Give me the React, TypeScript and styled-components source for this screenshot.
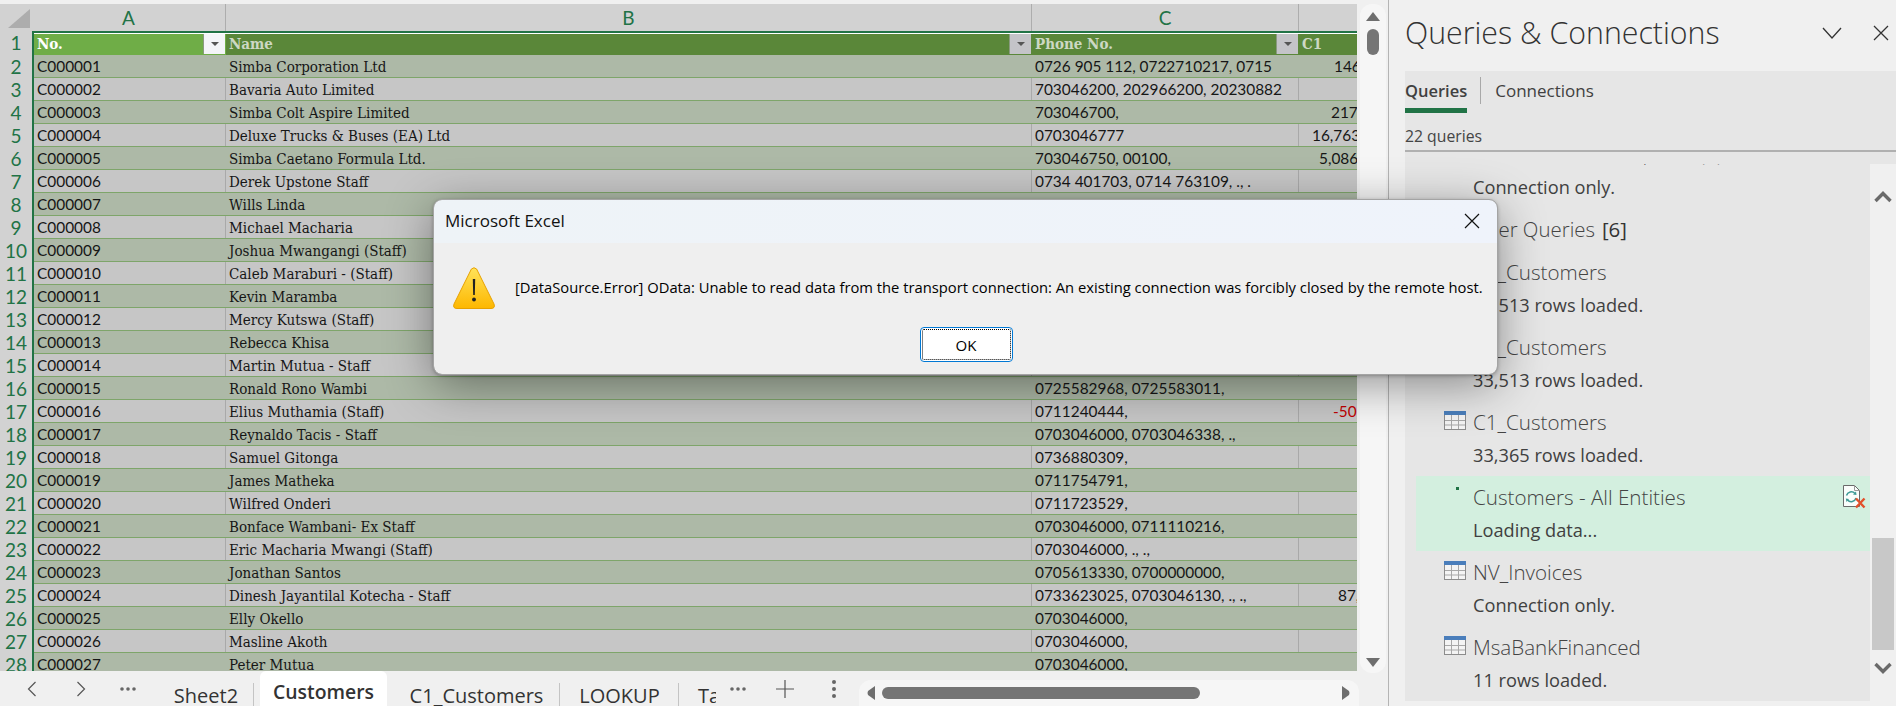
import React from "react";
import styled, { createGlobalStyle } from "styled-components";

const UI = `"Open Sans", "Noto Sans", sans-serif`;
const SLAB = `"DejaVu Serif Condensed", "DejaVu Serif", serif`;
const NUM = `Lato, "Open Sans", sans-serif`;

const Global = createGlobalStyle`
  html, body { margin: 0; padding: 0; background: #f0f0f0; }
  #root { width: 1896px; height: 706px; overflow: hidden; }
  * { box-sizing: border-box; }
`;

const Page = styled.div`
  position: relative;
  display: flex;
  width: 1896px;
  height: 706px;
  overflow: hidden;
  background: #f0f0f0;
  font-family: ${UI};
`;
const Workbook = styled.div`
  display: flex;
  flex-direction: column;
  width: 1389px;
  flex: none;
  border-right: 1px solid #b4b4b4;
`;
const SheetArea = styled.div`
  display: flex;
  height: 671px;
  padding-top: 4px;
`;
const Sheet = styled.div`
  display: flex;
  flex-direction: column;
  width: 1357px;
  overflow: hidden;
  background: #c6c6c6;
`;
const ColHeaders = styled.div`
  display: flex;
  height: 27px;
  flex: none;
  background: #d2d2d2;
`;
const Corner = styled.div`
  width: 32px;
  flex: none;
  display: flex;
  align-items: flex-end;
  justify-content: flex-end;
  padding: 0 2px 3px 0;
`;
const ColHead = styled.div<{ $w: number }>`
  width: ${(p) => p.$w}px;
  flex: none;
  text-align: center;
  font: 400 19px/27px ${NUM};
  color: #217346;
  border-right: 1px solid #adadad;
`;
const SheetMain = styled.div`
  display: flex;
  flex: 1;
  min-height: 0;
`;
const RowHeads = styled.div`
  width: 32px;
  flex: none;
  background: #d2d2d2;
  display: flex;
  flex-direction: column;
`;
const RowHead = styled.div<{ $first?: boolean }>`
  height: ${(p) => (p.$first ? 24 : 23)}px;
  flex: none;
  text-align: center;
  font: 400 19px/23px ${NUM};
  color: #217346;
`;
const Table = styled.div`
  flex: 1;
  min-width: 0;
  overflow: hidden;
  border-left: 2px solid #217346;
  border-top: 2px solid #217346;
  display: flex;
  flex-direction: column;
`;
const HeadRow = styled.div`
  display: grid;
  grid-template-columns: 192px 806px 267px 200px;
  height: 22px;
  flex: none;
  border-top: 1px solid #fff;
  background: #5a8739;
`;
const HeadCell = styled.div<{ $active?: boolean }>`
  position: relative;
  padding-left: 3px;
  background: ${(p) => (p.$active ? "#6fad47" : "#5a8739")};
  color: ${(p) => (p.$active ? "#fff" : "#cdd8c4")};
  font: 700 15px/21px ${SLAB};
`;
const Filter = styled.span<{ $active?: boolean }>`
  position: absolute;
  right: 1px;
  top: 0;
  bottom: 1px;
  width: 22px;
  display: flex;
  align-items: center;
  justify-content: center;
  background: ${(p) => (p.$active ? "#f4f5f8" : "#c4c4c8")};
  border-left: 1px solid #8a9a80;
  &::after {
    content: "";
    border-left: 4px solid transparent;
    border-right: 4px solid transparent;
    border-top: 4px solid #555;
  }
`;
const DataRow = styled.div<{ $alt: boolean }>`
  display: grid;
  grid-template-columns: 192px 806px 267px 200px;
  height: 23px;
  flex: none;
  background: ${(p) => (p.$alt ? "#adb9a7" : "#c6c6c6")};
  border-bottom: 1px solid #7ea56a;
`;
const Cell = styled.div<{ $alt: boolean; $font: "slab" | "num" }>`
  padding-left: 3px;
  overflow: hidden;
  white-space: nowrap;
  color: #161616;
  border-right: 1px solid ${(p) => (p.$alt ? "transparent" : "#a9a9a9")};
  font: ${(p) =>
    p.$font === "slab" ? `400 15px/24px ${SLAB}` : `400 15.4px/22px ${NUM}`};
`;
const ValueCell = styled.div<{ $indent: number; $neg?: boolean }>`
  padding-left: ${(p) => p.$indent}px;
  white-space: nowrap;
  color: ${(p) => (p.$neg ? "#c00000" : "#161616")};
  font: 400 15.4px/22px ${NUM};
`;
const VScroll = styled.div`
  width: 26px;
  margin-left: 3px;
  flex: none;
  height: 669px;
  background: #f6f6f6;
  border-radius: 12px;
  display: flex;
  flex-direction: column;
  align-items: center;
  padding: 8px 0 6px;
`;
const VThumb = styled.div`
  width: 12px;
  height: 26px;
  margin-top: 8px;
  border-radius: 6px;
  background: #757575;
`;
const Grow = styled.div`
  flex: 1;
`;
const TabBar = styled.div`
  display: flex;
  height: 35px;
  align-items: stretch;
  overflow: hidden;
  position: relative;
`;
const NavIcon = styled.div<{ $w: number }>`
  width: ${(p) => p.$w}px;
  flex: none;
  display: flex;
  align-items: center;
  justify-content: center;
  color: #555;
`;
const Tab = styled.div<{ $w: number; $active?: boolean; $line?: boolean; $cut?: boolean }>`
  width: ${(p) => p.$w}px;
  flex: none;
  overflow: hidden;
  white-space: nowrap;
  position: relative;
  text-align: ${(p) => (p.$cut ? "left" : "center")};
  padding-left: ${(p) => (p.$cut ? 19 : 0)}px;
  margin: ${(p) => (p.$active ? "0 6px" : "0")};
  color: #333;
  font: ${(p) => (p.$active ? `600 19.4px/42px ${UI}` : `400 20px/50px ${UI}`)};
  background: ${(p) => (p.$active ? "#ffffff" : "transparent")};
  border-radius: ${(p) => (p.$active ? "6px 6px 0 0" : "0")};
  &::after {
    content: "";
    display: ${(p) => (p.$line ? "block" : "none")};
    position: absolute;
    right: 0;
    top: 12px;
    bottom: 0;
    width: 1px;
    background: #c4c4c4;
  }
`;
const HTrack = styled.div`
  width: 500px;
  margin: 9px 29px 0 auto;
  background: #f6f6f6;
  border-radius: 12px 12px 0 0;
  flex: none;
  display: flex;
  align-items: center;
  padding: 0 9px 0 8px;
`;
const HThumb = styled.div`
  width: 318px;
  height: 12px;
  margin-left: 7px;
  border-radius: 6px;
  background: #757575;
`;

const Panel = styled.div`
  flex: 1;
  min-width: 0;
  display: flex;
  flex-direction: column;
  padding-left: 16px;
  height: 701px;
`;
const PanelHead = styled.div`
  height: 71px;
  flex: none;
  display: flex;
  align-items: center;
  padding-bottom: 5px;
`;
const PanelTitle = styled.div`
  font: 300 30.3px/1 ${UI};
  color: #333;
  flex: 1;
`;
const HeadIcons = styled.div`
  display: flex;
  align-items: center;
  gap: 31px;
  padding: 0 7px 0 0;
`;
const Inner = styled.div`
  flex: 1;
  min-height: 0;
  background: #e6e6e6;
  display: flex;
  flex-direction: column;
`;
const TabsRow = styled.div`
  display: flex;
  height: 42px;
  flex: none;
  padding-top: 6px;
`;
const PanelTab = styled.div<{ $active?: boolean }>`
  position: relative;
  height: 27px;
  font: ${(p) => (p.$active ? "600 16.5px" : "400 17px")}/27px ${UI};
  color: #404040;
  &::after {
    content: "";
    display: ${(p) => (p.$active ? "block" : "none")};
    position: absolute;
    left: 0;
    right: 0;
    top: 31px;
    height: 5px;
    background: #217346;
  }
`;
const TabSep = styled.div`
  width: 1px;
  height: 27px;
  background: #a8a8a8;
  margin: 0 14px 0 13px;
`;
const CountRow = styled.div`
  height: 39px;
  flex: none;
  padding-top: 12px;
  border-bottom: 2px solid #b0b0b0;
  font: 400 15.75px/22px ${UI};
  color: #444;
`;
const ListArea = styled.div`
  flex: 1;
  min-height: 0;
  display: flex;
`;
const ListClip = styled.div`
  flex: 1;
  min-width: 0;
  overflow: hidden;
  margin-top: 12px;
  padding-left: 11px;
`;
const ListInner = styled.div`
  margin-top: -31px;
`;
const ListScroll = styled.div`
  width: 26px;
  flex: none;
  margin-top: 12px;
  background: #f0f0f0;
  display: flex;
  flex-direction: column;
  align-items: center;
  padding-top: 26px;
`;
const ListThumb = styled.div`
  width: 22px;
  height: 112px;
  margin: 335px 0 12px;
  background: #c8c8c8;
`;
const Item = styled.div<{ $selected?: boolean }>`
  position: relative;
  height: 75px;
  padding: 2px 0 0 57px;
  background: ${(p) => (p.$selected ? "#d3efdf" : "transparent")};
`;
const ItemName = styled.div`
  font: 300 20.6px/38px ${UI};
  color: #444;
  white-space: nowrap;
`;
const ItemSub = styled.div`
  margin-top: 1px;
  font: 400 18.2px/27px ${UI};
  color: #404040;
  white-space: nowrap;
`;
const ItemIcon = styled.svg`
  position: absolute;
  left: 28px;
  top: 10px;
`;
const LoadDot = styled.span`
  position: absolute;
  left: 40px;
  top: 11px;
  width: 3px;
  height: 3px;
  background: #217346;
`;
const StateIcon = styled.svg`
  position: absolute;
  left: 427px;
  top: 9px;
`;
const GroupHead = styled.div`
  height: 43px;
  padding-left: 48px;
  font: 300 20.4px/43px ${UI};
  color: #444;
  white-space: nowrap;
`;
const GroupCount = styled.span`
  font-weight: 400;
  margin-left: 7px;
  color: #333;
`;

const DialogShadow = styled.div`
  position: absolute;
  left: 434px;
  top: 200px;
  width: 1063px;
  height: 174px;
  border-radius: 8px;
  box-shadow: 0 10px 48px rgba(0, 0, 0, 0.42), 0 1px 4px rgba(0, 0, 0, 0.4);
`;
const Dialog = styled.div`
  position: absolute;
  left: 434px;
  top: 200px;
  width: 1063px;
  height: 174px;
  border-radius: 8px;
  background: #efefef;
  overflow: hidden;
  outline: 1px solid #a4a4a4;
  display: flex;
  flex-direction: column;
`;
const DialogTitleBar = styled.div`
  height: 43px;
  flex: none;
  display: flex;
  align-items: center;
  justify-content: space-between;
  padding: 0 17px 2px 11px;
  background: linear-gradient(90deg, #eef3f7, #eff3fb);
  font: 400 17px/1 ${UI};
  color: #111;
`;
const DialogBody = styled.div`
  display: flex;
  align-items: center;
  height: 84px;
  flex: none;
  padding: 5px 0 0 19px;
`;
const Message = styled.div`
  margin-left: 20px;
  font: 400 14.75px/1 ${UI};
  color: #000;
  white-space: nowrap;
`;
const DialogFoot = styled.div`
  display: flex;
  justify-content: center;
`;
const OkButton = styled.button`
  width: 93px;
  height: 35px;
  margin-left: 1px;
  background: #fff;
  border: 1.5px solid #0078d4;
  border-radius: 4px;
  outline: 1px dotted #000;
  outline-offset: -3.5px;
  font: 400 15px/1 ${UI};
  color: #000;
  padding: 2px 0 0;
`;

type Rec = { no: string; name: string; phone: string; val?: string; indent?: number; neg?: boolean };
const rows: Rec[] = [
  { no: "C000001", name: "Simba Corporation Ltd", phone: "0726 905 112, 0722710217, 0715", val: "146,", indent: 35 },
  { no: "C000002", name: "Bavaria Auto Limited", phone: "703046200, 202966200, 20230882" },
  { no: "C000003", name: "Simba Colt Aspire Limited", phone: "703046700,", val: "217,", indent: 32 },
  { no: "C000004", name: "Deluxe Trucks & Buses (EA) Ltd", phone: "0703046777", val: "16,763", indent: 13 },
  { no: "C000005", name: "Simba Caetano Formula Ltd.", phone: "703046750, 00100,", val: "5,086", indent: 20 },
  { no: "C000006", name: "Derek Upstone Staff", phone: "0734 401703, 0714 763109, ., ." },
  { no: "C000007", name: "Wills Linda", phone: "0734170319," },
  { no: "C000008", name: "Michael Macharia", phone: "" },
  { no: "C000009", name: "Joshua Mwangangi (Staff)", phone: "" },
  { no: "C000010", name: "Caleb Maraburi - (Staff)", phone: "" },
  { no: "C000011", name: "Kevin Maramba", phone: "" },
  { no: "C000012", name: "Mercy Kutswa (Staff)", phone: "" },
  { no: "C000013", name: "Rebecca Khisa", phone: "" },
  { no: "C000014", name: "Martin Mutua - Staff", phone: "" },
  { no: "C000015", name: "Ronald Rono Wambi", phone: "0725582968, 0725583011," },
  { no: "C000016", name: "Elius Muthamia (Staff)", phone: "0711240444,", val: "-50,", indent: 34, neg: true },
  { no: "C000017", name: "Reynaldo Tacis - Staff", phone: "0703046000, 0703046338, .," },
  { no: "C000018", name: "Samuel Gitonga", phone: "0736880309," },
  { no: "C000019", name: "James Matheka", phone: "0711754791," },
  { no: "C000020", name: "Wilfred Onderi", phone: "0711723529," },
  { no: "C000021", name: "Bonface Wambani- Ex Staff", phone: "0703046000, 0711110216," },
  { no: "C000022", name: "Eric Macharia Mwangi (Staff)", phone: "0703046000, ., .," },
  { no: "C000023", name: "Jonathan Santos", phone: "0705613330, 0700000000," },
  { no: "C000024", name: "Dinesh Jayantilal Kotecha - Staff", phone: "0733623025, 0703046130, ., .,", val: "87,", indent: 39 },
  { no: "C000025", name: "Elly Okello", phone: "0703046000," },
  { no: "C000026", name: "Masline Akoth", phone: "0703046000," },
  { no: "C000027", name: "Peter Mutua", phone: "0703046000," },
];

const Tri = ({ d }: { d: "up" | "down" | "left" | "right" }) => {
  const p = {
    up: "M7 0 L14 9 H0 Z",
    down: "M0 0 H14 L7 9 Z",
    left: "M8 0 V14 L1 9 Q0 7 1 5 Z",
    right: "M0 0 L7 5 Q8 7 7 9 L0 14 Z",
  }[d];
  const horiz = d === "left" || d === "right";
  return (
    <svg width={horiz ? 8 : 14} height={horiz ? 14 : 9} viewBox={horiz ? "0 0 8 14" : "0 0 14 9"}>
      <path d={p} fill="#6e6e6e" />
    </svg>
  );
};

const TableGlyph = () => (
  <ItemIcon width="22" height="19" viewBox="0 0 22 19">
    <rect x="0.5" y="0.5" width="21" height="18" fill="#f4f4f4" stroke="#8c8c8c" />
    <rect x="0" y="0" width="22" height="4" fill="#4a7ebb" />
    <path d="M7.5 4V18M14.5 4V18M1 9.5H21M1 14H21" stroke="#a8a8a8" fill="none" />
  </ItemIcon>
);

const Chev = ({ up }: { up?: boolean }) => (
  <svg width="18" height="13" viewBox="0 0 18 13">
    <path d={up ? "M1.5 11 L9 3.5 L16.5 11" : "M1.5 2 L9 9.5 L16.5 2"} stroke="#6a6a6a" strokeWidth="3.4" fill="none" />
  </svg>
);

const Dots = () => (
  <svg width="16" height="4" viewBox="0 0 16 4">
    <circle cx="2" cy="2" r="1.8" fill="#666" />
    <circle cx="8" cy="2" r="1.8" fill="#666" />
    <circle cx="14" cy="2" r="1.8" fill="#666" />
  </svg>
);

const queries = [
  { name: "C4_Customers", sub: "33,513 rows loaded." },
  { name: "C3_Customers", sub: "33,513 rows loaded." },
  { name: "C1_Customers", sub: "33,365 rows loaded." },
  { name: "Customers - All Entities", sub: "Loading data...", loading: true },
  { name: "NV_Invoices", sub: "Connection only." },
  { name: "MsaBankFinanced", sub: "11 rows loaded." },
];

export default function App() {
  return (
    <Page>
      <Global />
      <Workbook>
        <SheetArea>
          <Sheet>
            <ColHeaders>
              <Corner>
                <svg width="22" height="19" viewBox="0 0 22 19">
                  <path d="M22 0V19H0Z" fill="#adadad" />
                </svg>
              </Corner>
              <ColHead $w={194}>A</ColHead>
              <ColHead $w={806}>B</ColHead>
              <ColHead $w={267}>C</ColHead>
              <ColHead $w={200}>D</ColHead>
            </ColHeaders>
            <SheetMain>
              <RowHeads>
                <RowHead $first>1</RowHead>
                {rows.map((_, i) => (
                  <RowHead key={i}>{i + 2}</RowHead>
                ))}
              </RowHeads>
              <Table>
                <HeadRow>
                  <HeadCell $active>No.<Filter $active /></HeadCell>
                  <HeadCell>Name<Filter /></HeadCell>
                  <HeadCell>Phone No.<Filter /></HeadCell>
                  <HeadCell>C1</HeadCell>
                </HeadRow>
                {rows.map((r, i) => {
                  const alt = i % 2 === 0;
                  return (
                    <DataRow key={r.no} $alt={alt}>
                      <Cell $alt={alt} $font="num">{r.no}</Cell>
                      <Cell $alt={alt} $font="slab">{r.name}</Cell>
                      <Cell $alt={alt} $font="num">{r.phone}</Cell>
                      <ValueCell $indent={r.indent ?? 0} $neg={r.neg}>{r.val}</ValueCell>
                    </DataRow>
                  );
                })}
              </Table>
            </SheetMain>
          </Sheet>
          <VScroll>
            <Tri d="up" />
            <VThumb />
            <Grow />
            <Tri d="down" />
          </VScroll>
        </SheetArea>
        <TabBar>
          <NavIcon $w={64}>
            <svg width="10" height="16" viewBox="0 0 10 16"><path d="M8.5 1 L1.5 8 L8.5 15" stroke="#555" strokeWidth="1.2" fill="none" /></svg>
          </NavIcon>
          <NavIcon $w={34}>
            <svg width="10" height="16" viewBox="0 0 10 16"><path d="M1.5 1 L8.5 8 L1.5 15" stroke="#555" strokeWidth="1.2" fill="none" /></svg>
          </NavIcon>
          <NavIcon $w={60}><Dots /></NavIcon>
          <Tab $w={96} $line>Sheet2</Tab>
          <Tab $w={127} $active>Customers</Tab>
          <Tab $w={167} $line>C1_Customers</Tab>
          <Tab $w={119} $line>LOOKUP</Tab>
          <Tab $w={37} $cut>Table1</Tab>
          <NavIcon $w={44}><Dots /></NavIcon>
          <NavIcon $w={50}>
            <svg width="18" height="18" viewBox="0 0 18 18"><path d="M9 0V18M0 9H18" stroke="#555" strokeWidth="1.2" /></svg>
          </NavIcon>
          <NavIcon $w={48}>
            <svg width="4" height="18" viewBox="0 0 4 18"><circle cx="2" cy="2" r="2" fill="#666" /><circle cx="2" cy="9" r="2" fill="#666" /><circle cx="2" cy="16" r="2" fill="#666" /></svg>
          </NavIcon>
          <HTrack>
            <Tri d="left" />
            <HThumb />
            <Grow />
            <Tri d="right" />
          </HTrack>
        </TabBar>
      </Workbook>
      <Panel>
        <PanelHead>
          <PanelTitle>Queries &amp; Connections</PanelTitle>
          <HeadIcons>
            <svg width="20" height="12" viewBox="0 0 20 12"><path d="M1 1 L10 11 L19 1" stroke="#333" strokeWidth="1.3" fill="none" /></svg>
            <svg width="16" height="16" viewBox="0 0 16 16"><path d="M1 1 L15 15 M15 1 L1 15" stroke="#333" strokeWidth="1.3" fill="none" /></svg>
          </HeadIcons>
        </PanelHead>
        <Inner>
          <TabsRow>
            <PanelTab $active>Queries</PanelTab>
            <TabSep />
            <PanelTab>Connections</PanelTab>
          </TabsRow>
          <CountRow>22 queries</CountRow>
          <ListArea>
            <ListClip>
              <ListInner>
                <Item>
                  <ItemName>Customers Master, New (1)</ItemName>
                  <ItemSub>Connection only.</ItemSub>
                </Item>
                <GroupHead>Other Queries<GroupCount>[6]</GroupCount></GroupHead>
                {queries.map((q) => (
                  <Item key={q.name} $selected={q.loading}>
                    {q.loading ? <LoadDot /> : <TableGlyph />}
                    <ItemName>{q.name}</ItemName>
                    <ItemSub>{q.sub}</ItemSub>
                    {q.loading && (
                      <StateIcon width="23" height="24" viewBox="0 0 23 24">
                        <path d="M0.5 0.5H11.5L16.5 5.5V21.5H0.5Z" fill="#fafdfb" stroke="#6a6a6a" />
                        <path d="M11.5 0.5V5.5H16.5" fill="none" stroke="#9a9a9a" />
                        <path d="M3.5 10.5 A5 5 0 0 1 12 8.5 M13 13 A5 5 0 0 1 4.5 15" fill="none" stroke="#3d9a96" strokeWidth="1.5" />
                        <path d="M10 9.5 L13.5 10 L13 6.5Z M6 14 L2.8 13.5 L3.5 17Z" fill="#3d9a96" />
                        <path d="M13 13.5 L21.5 22.5 M21.5 13.5 L13 22.5" stroke="#e2502a" strokeWidth="2.4" />
                      </StateIcon>
                    )}
                  </Item>
                ))}
              </ListInner>
            </ListClip>
            <ListScroll>
              <Chev up />
              <ListThumb />
              <Chev />
            </ListScroll>
          </ListArea>
        </Inner>
      </Panel>
      <DialogShadow />
      <Dialog>
        <DialogTitleBar>
          <span>Microsoft Excel</span>
          <svg width="16" height="16" viewBox="0 0 16 16"><path d="M1 1 L15 15 M15 1 L1 15" stroke="#111" strokeWidth="1.2" fill="none" /></svg>
        </DialogTitleBar>
        <DialogBody>
          <svg width="42" height="42" viewBox="0 0 42 42">
            <defs>
              <linearGradient id="warn" x1="0" y1="0" x2="0" y2="1">
                <stop offset="0" stopColor="#ffe35a" />
                <stop offset="1" stopColor="#fdb700" />
              </linearGradient>
            </defs>
            <path d="M18.4 2 Q21 -0.5 23.6 2 L41 37 Q42.5 41.5 38 41.5 H4 Q-0.5 41.5 1 37 Z" fill="url(#warn)" stroke="#e7a100" strokeWidth="1" />
            <path d="M19.8 12 H22.2 L21.8 28 H20.2 Z" fill="#222" />
            <circle cx="21" cy="32.5" r="1.9" fill="#222" />
          </svg>
          <Message>[DataSource.Error] OData: Unable to read data from the transport connection: An existing connection was forcibly closed by the remote host.</Message>
        </DialogBody>
        <DialogFoot>
          <OkButton>OK</OkButton>
        </DialogFoot>
      </Dialog>
    </Page>
  );
}
